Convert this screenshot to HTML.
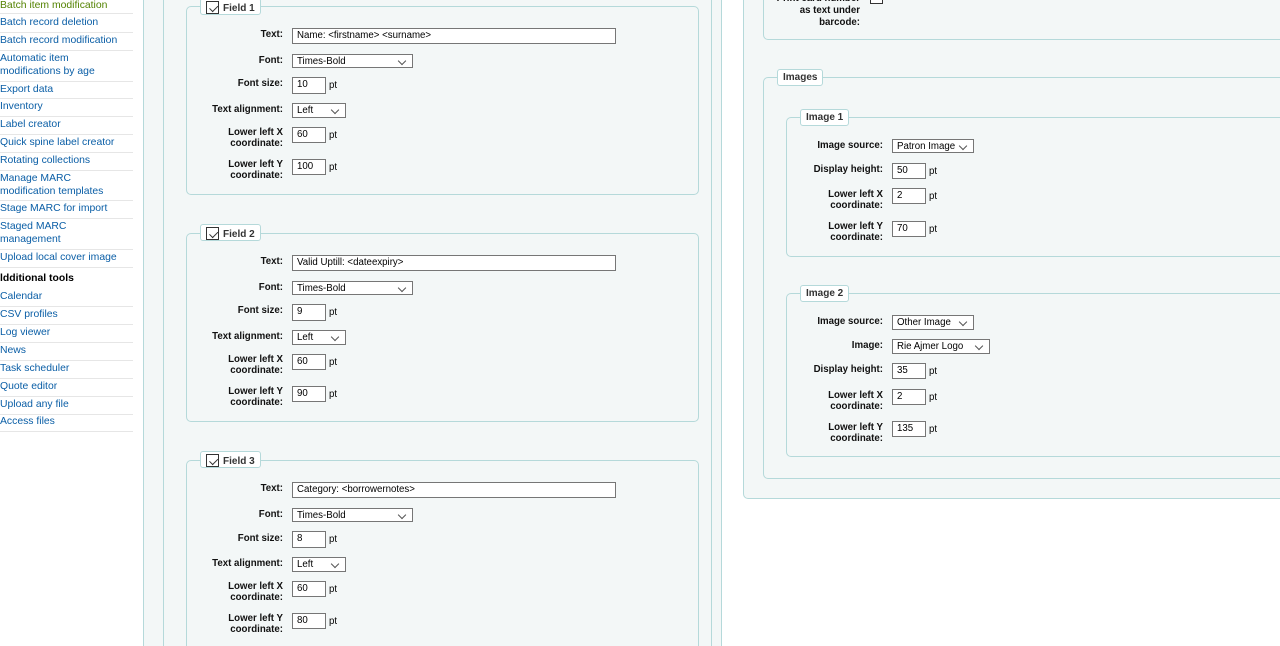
<!DOCTYPE html>
<html><head><meta charset="utf-8"><style>
*{margin:0;padding:0;box-sizing:border-box}
html{width:1280px;height:646px;overflow:hidden}
body{width:1280px;height:646px;overflow:hidden;background:#fff;font-family:"Liberation Sans",Arial,sans-serif;font-size:10px;color:#000;position:relative}
.a{position:absolute}
.sb{position:absolute;left:0;width:133px;border-bottom:1px solid #e6e6e6;color:#0a5ea6;line-height:12.5px;font-size:10.4px;white-space:nowrap;padding-top:2px}
.box{position:absolute;border:1px solid #b5d9da;border-radius:5px;background:#f3f7f7}
.leg{position:absolute;background:#fff;border:1px solid #b5d9da;border-radius:3px;font-weight:bold;font-size:10px;color:#333;padding:2px 5px;height:17px;line-height:12px;white-space:nowrap}
.cb{display:inline-block;width:13px;height:13px;border:1px solid #333;vertical-align:-3px;margin-right:4px;position:relative;background:#fff}
.cb:after{content:"";position:absolute;left:2px;top:1px;width:7px;height:4px;border-left:1.4px solid #333;border-bottom:1.4px solid #333;transform:rotate(-45deg) translate(-1px,2px)}
.lb{position:absolute;text-align:right;font-weight:bold;font-size:9.7px;line-height:11px;color:#111}
.in{position:absolute;background:#fff;border:1px solid #767676;font-size:9.7px;padding-left:4px;line-height:13px;color:#000;white-space:nowrap;overflow:hidden}
.sel:after{content:"";position:absolute;right:7px;top:3px;width:5px;height:5px;border-right:1px solid #555;border-bottom:1px solid #555;transform:rotate(45deg)}
.pt{position:absolute;font-size:9.7px}
.vl{position:absolute;top:0;height:646px;width:1px;background:#b5d9da}
.wrap{position:absolute;left:0;top:0;width:1280px;height:646px;overflow:hidden}
</style></head><body><div class="wrap">
<!-- sidebar -->
<div class="sb" style="top:-2px;height:16px;color:#538200">Batch item modification</div>
<div class="sb" style="top:15px;height:18px">Batch record deletion</div>
<div class="sb" style="top:33px;height:18px">Batch record modification</div>
<div class="sb" style="top:51px;height:31px">Automatic item<br>modifications by age</div>
<div class="sb" style="top:82px;height:17px">Export data</div>
<div class="sb" style="top:99px;height:18px">Inventory</div>
<div class="sb" style="top:117px;height:18px">Label creator</div>
<div class="sb" style="top:135px;height:18px">Quick spine label creator</div>
<div class="sb" style="top:153px;height:18px">Rotating collections</div>
<div class="sb" style="top:171px;height:30px">Manage MARC<br>modification templates</div>
<div class="sb" style="top:201px;height:18px">Stage MARC for import</div>
<div class="sb" style="top:219px;height:31px">Staged MARC<br>management</div>
<div class="sb" style="top:250px;height:18px">Upload local cover image</div>
<div class="a" style="top:273px;left:0;font-weight:bold;color:#000;line-height:12px;font-size:10.4px">ldditional tools</div>
<div class="sb" style="top:289px;height:18px">Calendar</div>
<div class="sb" style="top:307px;height:18px">CSV profiles</div>
<div class="sb" style="top:325px;height:18px">Log viewer</div>
<div class="sb" style="top:343px;height:18px">News</div>
<div class="sb" style="top:361px;height:18px">Task scheduler</div>
<div class="sb" style="top:379px;height:18px">Quote editor</div>
<div class="sb" style="top:397px;height:18px">Upload any file</div>
<div class="sb" style="top:414px;height:18px">Access files</div>

<!-- left column panels -->
<div class="a" style="left:143px;top:0;width:579px;height:646px;background:#f3f7f7"></div>
<div class="vl" style="left:143px"></div>
<div class="vl" style="left:163px"></div>
<div class="vl" style="left:711px"></div>
<div class="vl" style="left:721px"></div>

<!-- Field 1 -->
<div class="box" style="left:186px;top:6px;width:513px;height:189px"></div>
<div class="leg" style="left:200px;top:-2px"><span class="cb"></span>Field 1</div>
<div class="lb" style="left:190px;width:93px;top:29px">Text:</div><div class="in" style="left:292px;top:28px;width:324px;height:16px">Name: &lt;firstname&gt; &lt;surname&gt;</div>
<div class="lb" style="left:190px;width:93px;top:55px">Font:</div><div class="in sel" style="left:292px;top:54px;width:121px;height:14px">Times-Bold</div>
<div class="lb" style="left:190px;width:93px;top:78px">Font size:</div><div class="in" style="left:292px;top:77px;width:34px;height:17px">10</div><div class="pt" style="left:329px;top:80px">pt</div>
<div class="lb" style="left:190px;width:93px;top:104px">Text alignment:</div><div class="in sel" style="left:292px;top:103px;width:54px;height:15px">Left</div>
<div class="lb" style="left:190px;width:93px;top:127px">Lower left X<br>coordinate:</div><div class="in" style="left:292px;top:127px;width:34px;height:16px">60</div><div class="pt" style="left:329px;top:130px">pt</div>
<div class="lb" style="left:190px;width:93px;top:159px">Lower left Y<br>coordinate:</div><div class="in" style="left:292px;top:159px;width:34px;height:16px">100</div><div class="pt" style="left:329px;top:162px">pt</div>

<!-- Field 2 -->
<div class="box" style="left:186px;top:233px;width:513px;height:189px"></div>
<div class="leg" style="left:200px;top:224px"><span class="cb"></span>Field 2</div>
<div class="lb" style="left:190px;width:93px;top:256px">Text:</div><div class="in" style="left:292px;top:255px;width:324px;height:16px">Valid Uptill: &lt;dateexpiry&gt;</div>
<div class="lb" style="left:190px;width:93px;top:282px">Font:</div><div class="in sel" style="left:292px;top:281px;width:121px;height:14px">Times-Bold</div>
<div class="lb" style="left:190px;width:93px;top:305px">Font size:</div><div class="in" style="left:292px;top:304px;width:34px;height:17px">9</div><div class="pt" style="left:329px;top:307px">pt</div>
<div class="lb" style="left:190px;width:93px;top:331px">Text alignment:</div><div class="in sel" style="left:292px;top:330px;width:54px;height:15px">Left</div>
<div class="lb" style="left:190px;width:93px;top:354px">Lower left X<br>coordinate:</div><div class="in" style="left:292px;top:354px;width:34px;height:16px">60</div><div class="pt" style="left:329px;top:357px">pt</div>
<div class="lb" style="left:190px;width:93px;top:386px">Lower left Y<br>coordinate:</div><div class="in" style="left:292px;top:386px;width:34px;height:16px">90</div><div class="pt" style="left:329px;top:389px">pt</div>

<!-- Field 3 -->
<div class="box" style="left:186px;top:460px;width:513px;height:200px"></div>
<div class="leg" style="left:200px;top:451px"><span class="cb"></span>Field 3</div>
<div class="lb" style="left:190px;width:93px;top:483px">Text:</div><div class="in" style="left:292px;top:482px;width:324px;height:16px">Category: &lt;borrowernotes&gt;</div>
<div class="lb" style="left:190px;width:93px;top:509px">Font:</div><div class="in sel" style="left:292px;top:508px;width:121px;height:14px">Times-Bold</div>
<div class="lb" style="left:190px;width:93px;top:533px">Font size:</div><div class="in" style="left:292px;top:531px;width:34px;height:17px">8</div><div class="pt" style="left:329px;top:534px">pt</div>
<div class="lb" style="left:190px;width:93px;top:558px">Text alignment:</div><div class="in sel" style="left:292px;top:557px;width:54px;height:15px">Left</div>
<div class="lb" style="left:190px;width:93px;top:581px">Lower left X<br>coordinate:</div><div class="in" style="left:292px;top:581px;width:34px;height:16px">60</div><div class="pt" style="left:329px;top:584px">pt</div>
<div class="lb" style="left:190px;width:93px;top:613px">Lower left Y<br>coordinate:</div><div class="in" style="left:292px;top:613px;width:34px;height:16px">80</div><div class="pt" style="left:329px;top:616px">pt</div>

<!-- right column -->
<div class="box" style="left:743px;top:-10px;width:560px;height:509px"></div>
<div class="box" style="left:763px;top:-10px;width:540px;height:50px"></div>
<div class="lb" style="left:760px;width:100px;top:-7px;line-height:12px">Print card number<br>as text under<br>barcode:</div>
<div class="a" style="left:870px;top:-9px;width:13px;height:13px;border:1px solid #333;background:#fff"></div>

<div class="box" style="left:763px;top:77px;width:540px;height:402px"></div>
<div class="leg" style="left:777px;top:69px">Images</div>

<div class="box" style="left:786px;top:117px;width:520px;height:140px"></div>
<div class="leg" style="left:800px;top:109px">Image 1</div>
<div class="lb" style="left:780px;width:103px;top:140px">Image source:</div><div class="in sel" style="left:892px;top:139px;width:82px;height:14px">Patron Image</div>
<div class="lb" style="left:780px;width:103px;top:164px">Display height:</div><div class="in" style="left:892px;top:163px;width:34px;height:16px">50</div><div class="pt" style="left:929px;top:166px">pt</div>
<div class="lb" style="left:780px;width:103px;top:189px">Lower left X<br>coordinate:</div><div class="in" style="left:892px;top:188px;width:34px;height:16px">2</div><div class="pt" style="left:929px;top:191px">pt</div>
<div class="lb" style="left:780px;width:103px;top:221px">Lower left Y<br>coordinate:</div><div class="in" style="left:892px;top:221px;width:34px;height:16px">70</div><div class="pt" style="left:929px;top:224px">pt</div>

<div class="box" style="left:786px;top:293px;width:520px;height:164px"></div>
<div class="leg" style="left:800px;top:285px">Image 2</div>
<div class="lb" style="left:780px;width:103px;top:316px">Image source:</div><div class="in sel" style="left:892px;top:315px;width:82px;height:15px">Other Image</div>
<div class="lb" style="left:780px;width:103px;top:340px">Image:</div><div class="in sel" style="left:892px;top:339px;width:98px;height:15px">Rie Ajmer Logo</div>
<div class="lb" style="left:780px;width:103px;top:364px">Display height:</div><div class="in" style="left:892px;top:363px;width:34px;height:16px">35</div><div class="pt" style="left:929px;top:366px">pt</div>
<div class="lb" style="left:780px;width:103px;top:390px">Lower left X<br>coordinate:</div><div class="in" style="left:892px;top:389px;width:34px;height:16px">2</div><div class="pt" style="left:929px;top:392px">pt</div>
<div class="lb" style="left:780px;width:103px;top:422px">Lower left Y<br>coordinate:</div><div class="in" style="left:892px;top:421px;width:34px;height:16px">135</div><div class="pt" style="left:929px;top:424px">pt</div>
</div></body></html>
